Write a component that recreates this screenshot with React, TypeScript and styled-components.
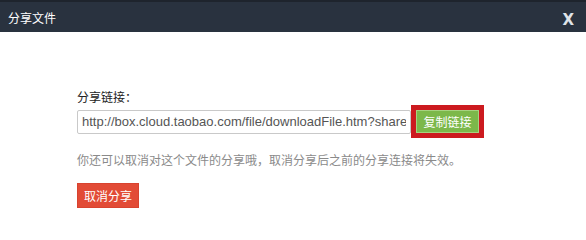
import styled, { createGlobalStyle } from 'styled-components';

const GlobalStyle = createGlobalStyle`
	html, body {
		margin: 0;
		padding: 0;
		background: #ffffff;
	}
	body {
		font-family: 'Liberation Sans', 'Noto Sans CJK SC', sans-serif;
		font-size: 12px;
	}
`;

const ShareDialog = () => {
	const link = 'http://box.cloud.taobao.com/file/downloadFile.htm?shareKey=d8Fh2kQ1';

	return (
		<Dialog>
			<Header>
				<Title>分享文件</Title>
				<CloseButton type='button'>X</CloseButton>
			</Header>
			<Body>
				<Label htmlFor='share-link'>分享链接：</Label>
				<LinkRow>
					<LinkInput id='share-link' readOnly value={link} />
					<Highlight>
						<CopyButton type='button'>复制链接</CopyButton>
					</Highlight>
				</LinkRow>
				<Notice>你还可以取消对这个文件的分享哦，取消分享后之前的分享连接将失效。</Notice>
				<CancelButton type='button'>取消分享</CancelButton>
			</Body>
		</Dialog>
	);
};

export default function App() {
	return (
		<>
			<GlobalStyle />
			<ShareDialog />
		</>
	);
}

const Dialog = styled.div`
	width: 586px;
	height: 210px;
	overflow: hidden;
	background: #ffffff;
`;

const Header = styled.div`
	height: 32px;
	box-sizing: border-box;
	display: flex;
	align-items: center;
	justify-content: space-between;
	padding: 0 12px 0 8px;
	background: #29323f;
	border-top: 2px solid #1e242d;
`;

const Title = styled.h1`
	margin: 2px 0 0;
	font-size: 12px;
	font-weight: normal;
	color: #ffffff;
	font-family: 'Noto Sans CJK SC', sans-serif;
	line-height: 16px;
`;

const CloseButton = styled.button`
	border: none;
	background: none;
	padding: 0;
	margin-top: 5px;
	font-family: 'DejaVu Sans', sans-serif;
	font-size: 15px;
	font-weight: bold;
	color: #dfe3e8;
	cursor: pointer;
`;

const Body = styled.div`
	display: flex;
	flex-direction: column;
	align-items: flex-start;
	padding: 57px 0 0 77px;
`;

const Label = styled.label`
	font-family: 'Noto Sans CJK SC', sans-serif;
	font-size: 12px;
	line-height: 16px;
	color: #222222;
`;

const LinkRow = styled.div`
	display: flex;
	align-items: center;
	height: 33px;
`;

const LinkInput = styled.input`
	width: 334px;
	height: 24px;
	box-sizing: border-box;
	border: 1px solid #c9c9c9;
	border-radius: 2px;
	padding: 0 4px;
	font-family: 'Liberation Sans', sans-serif;
	font-size: 13px;
	color: #555555;
	outline: none;
	background: #ffffff;
`;

const Highlight = styled.span`
	display: flex;
	border: 5px solid #cc1a1f;
	padding: 0;
`;

const CopyButton = styled.button`
	width: 63px;
	height: 23px;
	border: 1px solid #a6d27f;
	background: #7cb84a;
	color: #ffffff;
	font-family: 'Noto Sans CJK SC', sans-serif;
	font-size: 12px;
	padding: 0;
	cursor: pointer;
`;

const Notice = styled.p`
	margin: 14px 0 0;
	font-family: 'Noto Sans CJK SC', sans-serif;
	font-size: 12px;
	line-height: 16px;
	color: #8a8a8a;
`;

const CancelButton = styled.button`
	margin-top: 15px;
	width: 62px;
	height: 25px;
	border: 1px solid #d8432f;
	background: #e24b36;
	color: #ffffff;
	font-family: 'Noto Sans CJK SC', sans-serif;
	font-size: 12px;
	padding: 0;
	cursor: pointer;
`;
